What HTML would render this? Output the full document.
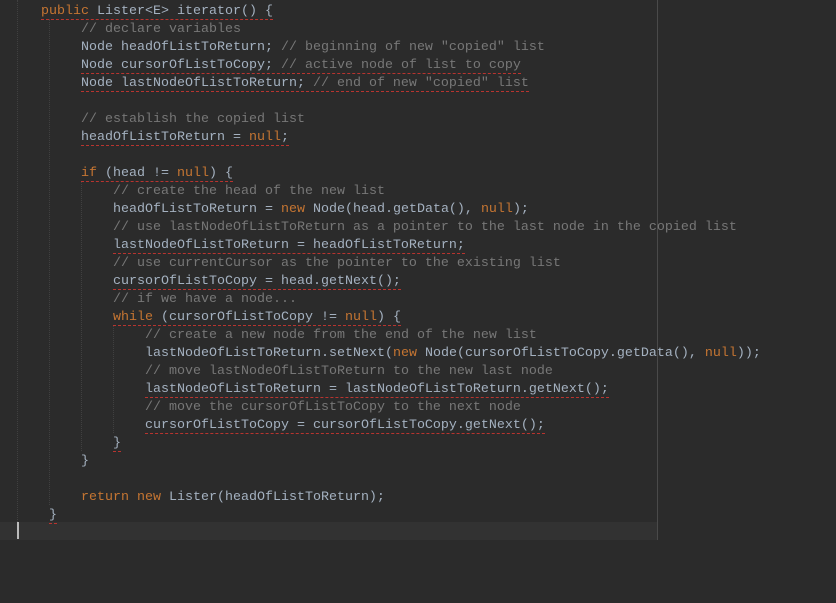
<!DOCTYPE html>
<html><head><meta charset="utf-8"><style>
html,body{margin:0;padding:0;background:#2b2b2b;width:836px;height:603px;overflow:hidden}
.ed{position:relative;width:836px;height:603px;font-family:"Liberation Mono","Courier New",monospace;font-size:13.33px;color:#a4b1c0}
.l{position:absolute;height:18px;line-height:18px;white-space:pre;margin-top:2px}
.k{color:#c57532}.c{color:#777}
.u{border-bottom:1px dashed #b8342f}
.g{position:absolute;width:0;border-left:1px dotted #404040}
</style></head><body><div class="ed">
<div style="position:absolute;left:0;top:522px;width:657px;height:18px;background:#323232"></div>
<div style="position:absolute;left:17px;top:522px;width:2px;height:17px;background:#bbb"></div>
<div style="position:absolute;left:657px;top:0;width:1px;height:540px;background:#4a4a4a"></div>
<div class="g" style="left:17px;top:0;height:522px"></div>
<div class="g" style="left:49px;top:19px;height:486px"></div>
<div class="g" style="left:81px;top:181px;height:270px"></div>
<div class="g" style="left:113px;top:325px;height:108px"></div>
<div class="l" style="left:41px;top:1px"><span class="u"><span class="k">public</span> Lister&lt;E&gt; iterator() {</span></div>
<div class="l c" style="left:81px;top:19px">// declare variables</div>
<div class="l" style="left:81px;top:37px">Node headOfListToReturn; <span class="c">// beginning of new "copied" list</span></div>
<div class="l"  style="left:81px;top:55px"><span class="u">Node cursorOfListToCopy; <span class="c">// active node of list to copy</span></span></div>
<div class="l" style="left:81px;top:73px"><span class="u">Node lastNodeOfListToReturn; <span class="c">// end of new "copied" list</span></span></div>
<div class="l c" style="left:81px;top:109px">// establish the copied list</div>
<div class="l" style="left:81px;top:127px"><span class="u">headOfListToReturn = <span class="k">null</span>;</span></div>
<div class="l" style="left:81px;top:163px"><span class="u"><span class="k">if</span> (head != <span class="k">null</span>) {</span></div>
<div class="l c" style="left:113px;top:181px">// create the head of the new list</div>
<div class="l" style="left:113px;top:199px">headOfListToReturn = <span class="k">new</span> Node(head.getData(), <span class="k">null</span>);</div>
<div class="l c" style="left:113px;top:217px">// use lastNodeOfListToReturn as a pointer to the last node in the copied list</div>
<div class="l" style="left:113px;top:235px"><span class="u">lastNodeOfListToReturn = headOfListToReturn;</span></div>
<div class="l c" style="left:113px;top:253px">// use currentCursor as the pointer to the existing list</div>
<div class="l" style="left:113px;top:271px"><span class="u">cursorOfListToCopy = head.getNext();</span></div>
<div class="l c" style="left:113px;top:289px">// if we have a node...</div>
<div class="l" style="left:113px;top:307px"><span class="u"><span class="k">while</span> (cursorOfListToCopy != <span class="k">null</span>) {</span></div>
<div class="l c" style="left:145px;top:325px">// create a new node from the end of the new list</div>
<div class="l" style="left:145px;top:343px">lastNodeOfListToReturn.setNext(<span class="k">new</span> Node(cursorOfListToCopy.getData(), <span class="k">null</span>));</div>
<div class="l c" style="left:145px;top:361px">// move lastNodeOfListToReturn to the new last node</div>
<div class="l" style="left:145px;top:379px"><span class="u">lastNodeOfListToReturn = lastNodeOfListToReturn.getNext();</span></div>
<div class="l c" style="left:145px;top:397px">// move the cursorOfListToCopy to the next node</div>
<div class="l" style="left:145px;top:415px"><span class="u">cursorOfListToCopy = cursorOfListToCopy.getNext();</span></div>
<div class="l" style="left:113px;top:433px"><span class="u">}</span></div>
<div class="l" style="left:81px;top:451px">}</div>
<div class="l" style="left:81px;top:487px"><span class="k">return new</span> Lister(headOfListToReturn);</div>
<div class="l" style="left:49px;top:505px"><span class="u">}</span></div>
</div></body></html>
